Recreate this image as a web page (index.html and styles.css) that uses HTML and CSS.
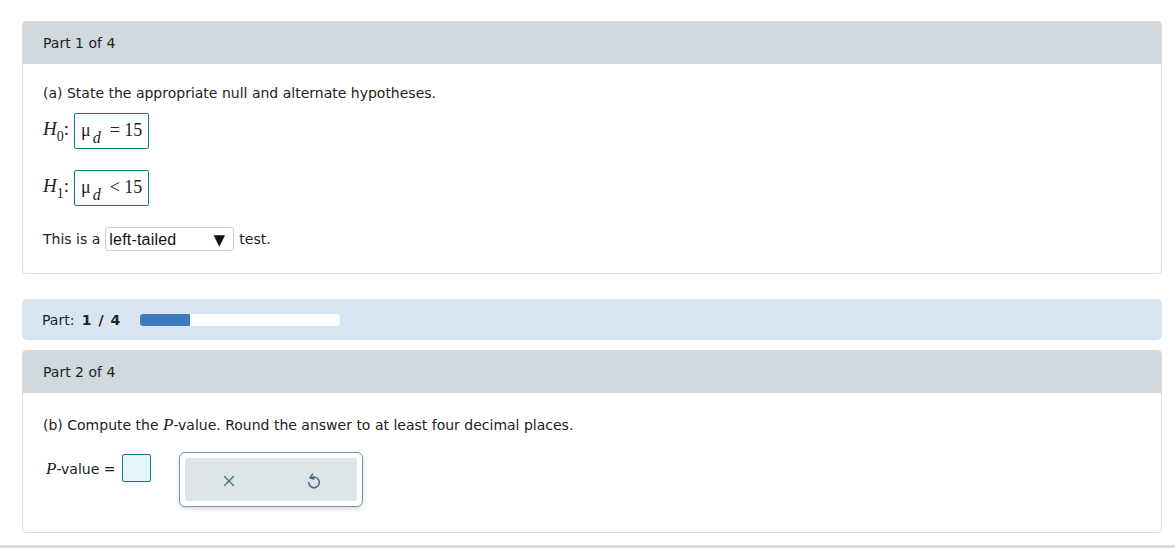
FILE: index.html
```html
<!DOCTYPE html>
<html lang="en">
<head>
  <meta charset="UTF-8">
  <title>Hypothesis test</title>
  <link rel="stylesheet" href="styles.css">
</head>
<body>
  <!-- Part 1 -->
  <section class="card">
    <div class="card-head">Part 1 of 4</div>
    <div class="card-body body-1">
      <p class="question">(a) State the appropriate null and alternate hypotheses.</p>

      <div class="hyp-row">
        <span class="hyp-label"><i>H</i><sub>0</sub>:</span>
        <span class="math-box">μ<sub class="sub-d">d</sub>= 15</span>
      </div>
      <div class="hyp-row">
        <span class="hyp-label"><i>H</i><sub>1</sub>:</span>
        <span class="math-box">μ<sub class="sub-d">d</sub>&lt; 15</span>
      </div>

      <div class="test-row">
        <span>This is a</span>
        <span class="select">left-tailed <span class="arrow">▼</span></span>
        <span>test.</span>
      </div>
    </div>
  </section>

  <!-- progress -->
  <div class="progress">
    <span>Part: <strong class="count">1 / 4</strong></span>
    <div class="bar"><div class="bar-fill" style="width: 25%"></div></div>
  </div>

  <!-- Part 2 -->
  <section class="card">
    <div class="card-head">Part 2 of 4</div>
    <div class="card-body body-2">
      <p class="question">(b) Compute the <i class="math">P</i>-value. Round the answer to at least four decimal places.</p>

      <div class="answer-row">
        <span class="pv-label"><i class="math">P</i>-value =</span>
        <span class="answer-box"></span>
        <div class="tools">
          <div class="tools-inner">
            <svg width="14" height="14" viewBox="0 0 14 14">
              <path d="M1.5 1.5 L12.5 12.5 M12.5 1.5 L1.5 12.5" stroke="#3f6f7d" stroke-width="1.5" fill="none"/>
            </svg>
            <svg width="14" height="18" viewBox="0 0 14 18">
              <path d="M3.6 6.4 A5.3 5.3 0 1 1 1.8 10" stroke="#3f6f7d" stroke-width="1.6" fill="none"/>
              <path d="M6 1.6 L3 5.8 L7.4 7.2" stroke="#3f6f7d" stroke-width="1.6" fill="none" stroke-linejoin="round"/>
            </svg>
          </div>
        </div>
      </div>
    </div>
  </section>

  <div class="next-strip"></div>
</body>
</html>
```

FILE: styles.css
```css
/* base */
body {
  margin: 0;
  padding: 21px 13px 0 22px;
  font-family: 'DejaVu Sans', Verdana, sans-serif;
  font-size: 14px;
  color: #222;
  background-color: #fff;
}

p {
  margin: 0;
}

/* cards */
.card {
  border: 1px solid #d3dce1;
  border-radius: 4px;
  overflow: hidden;
}

.card-head {
  background-color: #cfd9de;
  height: 42px;
  line-height: 42px;
  padding-left: 20px;
}

.card-body {
  padding: 20px;
}

.body-1 {
  padding-bottom: 22px;
}

.question {
  line-height: 18px;
}

/* hypotheses */
.hyp-row {
  display: flex;
  align-items: center;
  margin-top: 11px;
  font-family: 'Liberation Serif', 'Times New Roman', serif;
  font-size: 19px;
}

.hyp-row + .hyp-row {
  margin-top: 21px;
}

.hyp-label {
  width: 31px;
}

.hyp-label sub {
  font-size: 14px;
  vertical-align: -6px;
}

.math-box {
  display: inline-block;
  width: 75px;
  height: 36px;
  line-height: 33px;
  padding-left: 6px;
  box-sizing: border-box;
  border: 1px solid #12798a;
  border-radius: 2px;
  font-size: 18px;
  white-space: nowrap;
}

.math-box .sub-d {
  font-style: italic;
  font-size: 16px;
  vertical-align: -7px;
  line-height: 0;
  margin: 0 9px 0 2px;
}

.test-row {
  display: flex;
  align-items: center;
  gap: 5px;
  margin-top: 21px;
}

.select {
  display: inline-flex;
  justify-content: space-between;
  align-items: center;
  width: 129px;
  height: 24px;
  padding: 2px 8px 0 3px;
  box-sizing: border-box;
  border: 1px solid #cfcfcf;
  border-radius: 3px;
  font-family: 'Liberation Sans', Arial, sans-serif;
  font-size: 16px;
  letter-spacing: 0.2px;
  color: #111;
}

.arrow {
  font-family: 'DejaVu Sans', sans-serif;
  font-size: 15px;
}

/* progress */
.progress {
  display: flex;
  align-items: center;
  gap: 20px;
  height: 41px;
  margin: 25px 0 10px;
  padding-left: 20px;
  background-color: #d9e6f2;
  border-radius: 5px;
}

.count {
  margin-left: 3px;
  word-spacing: 2px;
}

.bar {
  width: 200px;
  height: 12px;
  background-color: #fff;
  border-radius: 3px;
  overflow: hidden;
}

.bar-fill {
  height: 100%;
  background-color: #3c7bbd;
}

/* part 2 */
.body-2 {
  padding-top: 23px;
  padding-bottom: 25px;
}

.math {
  font-family: 'Liberation Serif', 'Times New Roman', serif;
  font-size: 17px;
}

.answer-row {
  display: flex;
  align-items: flex-start;
  margin-top: 18px;
}

.pv-label {
  margin: 7px 6px 0 3px;
}

.answer-box {
  width: 29px;
  height: 28px;
  box-sizing: border-box;
  margin-top: 2px;
  border: 1px solid #12798a;
  border-radius: 2px;
  background-color: #e4f4f8;
}

.tools {
  margin-left: 28px;
  padding: 5px;
  border: 1px solid #6f9aa6;
  border-radius: 6px;
  background-color: #fff;
  box-shadow: 0 2px 5px rgba(0, 0, 0, 0.15);
}

.tools-inner {
  display: flex;
  justify-content: space-around;
  align-items: center;
  width: 172px;
  height: 43px;
  background-color: #dde5e9;
  border-radius: 3px;
}

.tools-inner svg {
  margin-top: 2px;
}

.tools-inner svg:first-child {
  width: 12px;
  height: 12px;
  margin-left: 2px;
}

.next-strip {
  height: 4px;
  margin: 12px -13px 0 -22px;
  background-color: #d6dde2;
}
```
